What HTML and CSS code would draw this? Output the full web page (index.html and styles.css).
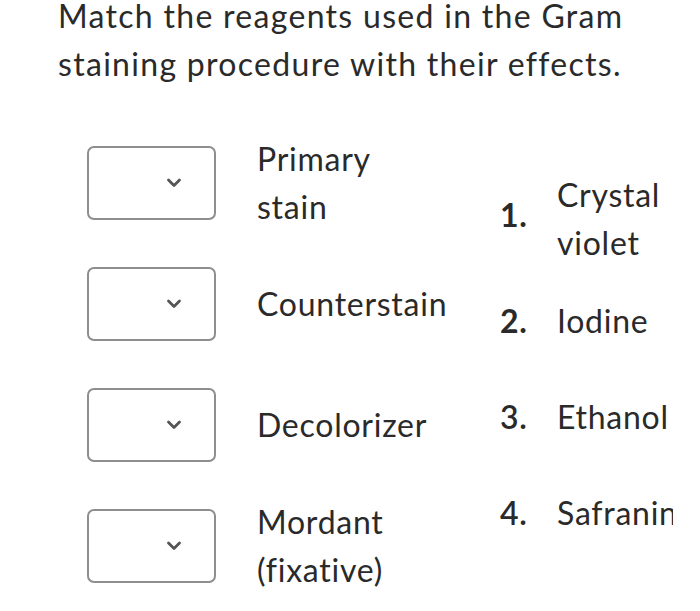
FILE: index.html
```html
<!DOCTYPE html>
<html lang="en">
<head>
<meta charset="utf-8">
<title>Gram staining matching</title>
<link rel="stylesheet" href="styles.css">
</head>
<body>
<div class="question">
  <p class="prompt">Match the reagents used in the Gram staining procedure with their effects.</p>
  <div class="matching">
    <div class="rows">
      <div class="row">
        <div class="select"><svg class="chev" width="16" height="10" viewBox="0 0 16 10"><polyline points="2.5,2 8,7.5 13.5,2"/></svg></div>
        <div class="label">Primary stain</div>
      </div>
      <div class="row">
        <div class="select"><svg class="chev" width="16" height="10" viewBox="0 0 16 10"><polyline points="2.5,2 8,7.5 13.5,2"/></svg></div>
        <div class="label">Counterstain</div>
      </div>
      <div class="row">
        <div class="select"><svg class="chev" width="16" height="10" viewBox="0 0 16 10"><polyline points="2.5,2 8,7.5 13.5,2"/></svg></div>
        <div class="label">Decolorizer</div>
      </div>
      <div class="row">
        <div class="select"><svg class="chev" width="16" height="10" viewBox="0 0 16 10"><polyline points="2.5,2 8,7.5 13.5,2"/></svg></div>
        <div class="label">Mordant (fixative)</div>
      </div>
    </div>
    <ol class="answers">
      <li class="answer first"><span class="num num-bold">1.</span><span class="text">Crystal violet</span></li>
      <li class="answer"><span class="num num-bold">2.</span><span class="text">Iodine</span></li>
      <li class="answer"><span class="num">3.</span><span class="text">Ethanol</span></li>
      <li class="answer"><span class="num">4.</span><span class="text">Safranin</span></li>
    </ol>
  </div>
</div>
</body>
</html>
```
FILE: styles.css
```css
html, body {
  margin: 0;
  padding: 0;
  background: #ffffff;
  overflow: hidden;
}
body {
  font-family: Lato, "Open Sans", "Liberation Sans", sans-serif;
  font-size: 32px;
  line-height: 48px;
  color: #2a2a2a;
  width: 700px;
  height: 611px;
  font-variant-ligatures: none;
  letter-spacing: 0.75px;
}
.question {
  padding-left: 58px;
}
.prompt {
  margin: -8px 0 0 0;
  width: 600px;
  letter-spacing: 1.3px;
}
.matching {
  display: flex;
  margin-top: 47px;
  margin-left: -58px;
}
.rows {
  display: flex;
  flex-direction: column;
  gap: 25px;
  padding-left: 87px;
  width: 330px;
  flex: none;
}
.row {
  display: flex;
  align-items: center;
  min-height: 96px;
}
.select {
  box-sizing: border-box;
  width: 129px;
  height: 74px;
  border: 2px solid #8e8e8e;
  border-radius: 7px;
  display: flex;
  align-items: center;
  justify-content: flex-end;
  padding-right: 32px;
  flex: none;
}
.chev polyline {
  fill: none;
  stroke: #555555;
  stroke-width: 2.8;
  stroke-linecap: round;
  stroke-linejoin: round;
}
.label {
  margin-left: 41px;
  width: 160px;
}
.answers {
  list-style: none;
  margin: 36px 0 0 83px;
  padding: 0;
  display: flex;
  flex-direction: column;
  gap: 48px;
}
.answer {
  display: flex;
  white-space: nowrap;
}
.answer.first {
  margin-bottom: -18px;
}
.num {
  width: 57px;
  flex: none;
  font-weight: 600;
}
.num-bold {
  font-weight: 700;
}
.first .num {
  align-self: center;
  margin-bottom: 8px;
}
.text {
  width: 116px;
  white-space: normal;
  overflow: hidden;
}
```
